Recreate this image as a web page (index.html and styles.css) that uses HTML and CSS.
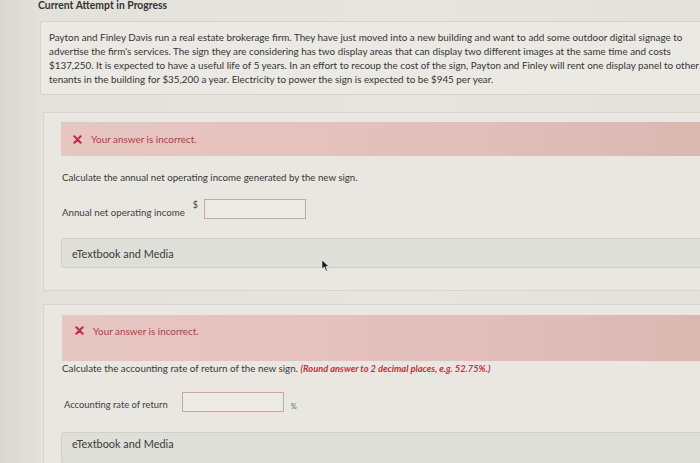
FILE: index.html
```html
<!DOCTYPE html>
<html>
<head>
<meta charset="utf-8">
<link rel="stylesheet" href="styles.css">
</head>
<body>
<div class="page">
  <div class="title">Current Attempt in Progress</div>
  <div class="problem">
    <p><span class="ln">Payton and Finley Davis run a real estate brokerage firm. They have just moved into a new building and want to add some outdoor digital signage to</span>
    <span class="ln">advertise the firm's services. The sign they are considering has two display areas that can display two different images at the same time and costs</span>
    <span class="ln">$137,250. It is expected to have a useful life of 5 years. In an effort to recoup the cost of the sign, Payton and Finley will rent one display panel to other</span>
    <span class="ln">tenants in the building for $35,200 a year. Electricity to power the sign is expected to be $945 per year.</span></p>
  </div>

  <div class="card card-one">
    <div class="banner">
      <svg class="xicon" width="9" height="9" viewBox="0 0 10 10"><path d="M1.5 1.5 L8.5 8.5 M8.5 1.5 L1.5 8.5" stroke="#c62f3b" stroke-width="2.4" stroke-linecap="round"/></svg>
      <span>Your answer is incorrect.</span>
    </div>
    <div class="question">Calculate the annual net operating income generated by the new sign.</div>
    <div class="answer answer-one">
      <span class="label">Annual net operating income</span>
      <span class="unit-pre">$</span>
      <span class="input"></span>
    </div>
    <div class="ebar"><span>eTextbook and Media</span></div>
  </div>

  <div class="card card-two">
    <div class="banner banner-tall">
      <svg class="xicon" width="9" height="9" viewBox="0 0 10 10"><path d="M1.5 1.5 L8.5 8.5 M8.5 1.5 L1.5 8.5" stroke="#c62f3b" stroke-width="2.4" stroke-linecap="round"/></svg>
      <span>Your answer is incorrect.</span>
    </div>
    <div class="question q-two">Calculate the accounting rate of return of the new sign. <em class="hint">(Round answer to 2 decimal places, e.g. 52.75%.)</em></div>
    <div class="answer answer-two">
      <span class="label">Accounting rate of return</span>
      <span class="input"></span>
      <span class="unit-post">%</span>
    </div>
    <div class="ebar ebar-two"><span>eTextbook and Media</span></div>
  </div>
</div>
<svg class="cursor" width="9" height="13" viewBox="0 0 9 13"><path d="M1 1 L1 10 L3.3 8 L5 12 L6.4 11.4 L4.8 7.6 L7.8 7.4 Z" fill="#1a1a1a" stroke="#f4f4f4" stroke-width="0.6"/></svg>
</body>
</html>
```
FILE: styles.css
```css
html, body {
  margin: 0;
  padding: 0;
}
body {
  width: 700px;
  height: 463px;
  overflow: hidden;
  background: linear-gradient(90deg, #d9d9d3 0px, #e2e1da 40px, #e6e5de 400px, #e2e1da 700px);
  font-family: Lato, "Open Sans", sans-serif;
  color: #3b3b3b;
  position: relative;
}
.page {
  padding-left: 38px;
  display: flex;
  flex-direction: column;
}
.title {
  font-weight: 700;
  font-size: 10.4px;
  line-height: 12px;
  height: 12px;
  margin-top: -1px;
  color: #333;
}
.problem {
  margin-top: 10px;
  margin-left: 2px;
  width: 680px;
  border: 1px solid #d4d3cd;
  border-radius: 2px;
  background: #eae9e3;
  padding: 8px 8px 8px 8px;
  overflow: hidden;
}
.problem p {
  margin: 0;
  font-size: 9.85px;
  line-height: 14px;
  color: #353535;
}
.ln {
  display: block;
  white-space: nowrap;
}
.card {
  margin-left: 5px;
  width: 670px;
  border: 1px solid #d6d5cf;
  background: #e8e7e1;
  padding: 9px 18px 22px 17px;
  display: flex;
  flex-direction: column;
}
.card-one {
  margin-top: 17px;
}
.card-two {
  margin-top: 13px;
  padding-top: 10px;
  padding-right: 22px;
}
.banner {
  height: 34px;
  background: linear-gradient(90deg, #e6c6c3, #e2bfbb 60%, #dab6b1);
  display: flex;
  align-items: center;
  gap: 9px;
  padding-left: 12px;
  font-size: 9.9px;
  color: #c03545;
}
.banner-tall {
  height: 46px;
  align-items: flex-start;
  padding-top: 11px;
  box-sizing: border-box;
  padding-left: 13px;
  margin-left: 1px;
}
.banner-tall span {
  line-height: 10px;
}
.xicon {
  display: block;
  flex: none;
}
.question {
  margin-top: 15px;
  font-size: 9.7px;
  line-height: 12px;
  padding-left: 1px;
  color: #383838;
}
.q-two {
  margin-top: 1px;
  font-size: 9.8px;
}
.hint {
  color: #c9303c;
  font-weight: 700;
  font-size: 9.3px;
}
.answer {
  display: flex;
  align-items: flex-start;
  margin-top: 16px;
  font-size: 9.7px;
  color: #404040;
}
.answer-one .label {
  padding-left: 1px;
  margin-top: 7px;
}
.unit-pre {
  margin-left: 8px;
  margin-top: 0px;
  font-size: 9px;
}
.answer-one .input {
  margin-left: 6px;
}
.input {
  width: 100px;
  height: 18px;
  border: 1px solid #c8a79f;
  background: #eceae5;
}
.answer-two {
  margin-top: 17px;
}
.answer-two .label {
  padding-left: 3px;
  margin-top: 7px;
  font-size: 9.4px;
}
.answer-two .input {
  margin-left: 14px;
}
.unit-post {
  margin-left: 7px;
  margin-top: 10px;
  font-size: 7.5px;
  color: #666;
}
.ebar {
  margin-top: 19px;
  height: 28px;
  border: 1px solid #d0cfc9;
  border-radius: 3px;
  background: #dfdfd9;
  display: flex;
  align-items: center;
  padding-left: 10px;
  font-size: 10.9px;
  color: #3a3a3a;
}
.ebar-two {
  height: 32px;
  margin-top: 20px;
  align-items: flex-start;
  padding-top: 4px;
  box-sizing: border-box;
}
.cursor {
  position: absolute;
  left: 321px;
  top: 259px;
}
```
